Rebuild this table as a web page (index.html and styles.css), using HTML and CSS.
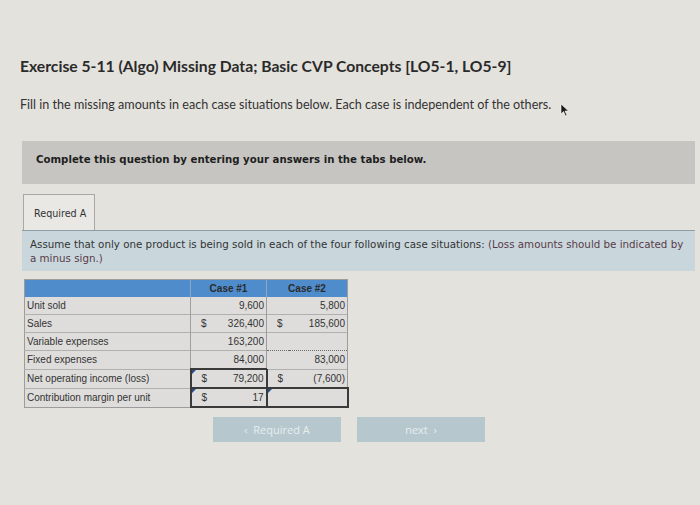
FILE: index.html
```html
<!DOCTYPE html>
<html>
<head>
<meta charset="utf-8">
<link rel="stylesheet" href="styles.css">
</head>
<body>
<div class="page">
  <h1 class="title">Exercise 5-11 (Algo) Missing Data; Basic CVP Concepts [LO5-1, LO5-9]</h1>
  <p class="intro">Fill in the missing amounts in each case situations below. Each case is independent of the others.<svg class="cursor" width="10" height="14" viewBox="0 0 10 14"><path d="M1 1 L1 11 L3.5 8.5 L5.5 13 L7 12.3 L5 8 L8.5 8 Z" fill="#1a1a1a" stroke="#fff" stroke-width="0.6"/></svg></p>
  <div class="banner">Complete this question by entering your answers in the tabs below.</div>
  <div class="tabs"><div class="tab">Required A</div></div>
  <div class="instructions">Assume that only one product is being sold in each of the four following case situations: <span class="note">(Loss amounts should be indicated by a minus sign.)</span></div>
  <table class="grid">
    <colgroup><col class="c-lbl"><col class="c-cur"><col class="c-val1"><col class="c-cur"><col class="c-val2"></colgroup>
    <thead>
      <tr><th></th><th colspan="2" class="hsep">Case #1</th><th colspan="2">Case #2</th></tr>
    </thead>
    <tbody>
      <tr><td class="lbl">Unit sold</td><td class="cur"></td><td class="val">9,600</td><td class="cur"></td><td class="val">5,800</td></tr>
      <tr><td class="lbl">Sales</td><td class="cur">$</td><td class="val">326,400</td><td class="cur dotb">$</td><td class="val dotb">185,600</td></tr>
      <tr><td class="lbl">Variable expenses</td><td class="cur"></td><td class="val">163,200</td><td class="cur dotl"></td><td class="val dotr"></td></tr>
      <tr><td class="lbl">Fixed expenses</td><td class="cur"></td><td class="val">84,000</td><td class="cur dott"></td><td class="val dott">83,000</td></tr>
      <tr><td class="lbl">Net operating income (loss)</td><td class="cur box mark">$</td><td class="val box">79,200</td><td class="cur">$</td><td class="val">(7,600)</td></tr>
      <tr><td class="lbl">Contribution margin per unit</td><td class="cur box mark">$</td><td class="val box">17</td><td class="cur box mark"></td><td class="val box"></td></tr>
    </tbody>
  </table>
  <div class="nav">
    <div class="btn">&lsaquo;&nbsp;&nbsp;Required A</div>
    <div class="btn">next&nbsp;&nbsp;&rsaquo;</div>
  </div>
</div>
</body>
</html>
```
FILE: styles.css
```css
html, body { margin: 0; padding: 0; }
body {
  background: #e4e2dd;
  width: 700px;
  height: 505px;
  overflow: hidden;
  font-family: "Liberation Sans", Arial, sans-serif;
  color: #222;
}
.page { padding: 57px 5px 0 20px; }
.title {
  font-family: Lato, "Open Sans", sans-serif;
  font-weight: 700;
  font-size: 15.7px;
  margin: 0;
  color: #2a2a2a;
}
.intro {
  font-family: Lato, "Open Sans", sans-serif;
  font-size: 12.6px;
  margin: 22px 0 0 0;
  color: #333;
  position: relative;
}
.cursor { position: absolute; left: 540px; top: 6px; }
.banner {
  margin: 29px 0 0 2px;
  background: #c6c5c1;
  height: 43px;
  box-sizing: border-box;
  padding: 13px 0 0 14px;
  font-family: "DejaVu Sans", Verdana, sans-serif;
  font-weight: 700;
  font-size: 10.2px;
  color: #1e1e1e;
}
.tabs { margin: 10px 0 0 3px; height: 36px; }
.tab {
  width: 72px;
  height: 36px;
  box-sizing: border-box;
  border: 1px solid #a9a8a4;
  border-bottom: none;
  background: #e9e8e4;
  font-family: "DejaVu Sans", Verdana, sans-serif;
  font-size: 9.6px;
  padding: 13px 0 0 10px;
  color: #333;
}
.instructions {
  margin-left: 2px;
  background: #c9d7dc;
  border-top: 1px solid #8e9ea5;
  padding: 6px 6px 6px 8px;
  height: 28px;
  font-family: "DejaVu Sans", Verdana, sans-serif;
  font-size: 10.3px;
  line-height: 14px;
  color: #333;
}
.note { color: #5a3a48; }
.grid {
  margin: 8px 0 0 4px;
  border-collapse: collapse;
  table-layout: fixed;
  width: 323px;
  font-family: "Liberation Sans", Arial, sans-serif;
  font-size: 10px;
  border: 1px solid #9c9c9c;
}
.c-lbl { width: 166px; }
.c-cur { width: 22px; }
.c-val1 { width: 54px; }
.c-val2 { width: 59px; }
.grid th {
  background: #4f8ccb;
  height: 17px;
  font-weight: 700;
  color: #2b2b2b;
  font-size: 10px;
  padding: 0;
}
.grid th.hsep { border-right: 1px solid #8aa7c4; border-left: 1px solid #8aa7c4; }
.grid td {
  background: #dedddb;
  height: 17px;
  padding: 0 2px;
  border-top: 1px solid #b0b0b0;
  color: #333;
  position: relative;
  white-space: nowrap;
}
.grid tbody tr:first-child td { border-top: none; }
.grid td.lbl { border-right: 1px solid #a0a0a0; }
.grid td.cur { text-align: left; padding-left: 10px; }
.grid td.val { text-align: right; border-right: 1px solid #9c9c9c; }
.grid td.dotb { border-bottom: 1px dotted #666; }
.grid td.dott { border-top: 1px dotted #666; }
.grid td.dotl { border-left: 1px dotted #666; }
.grid td.dotr { border-right: 1px dotted #666; }
.grid td.box { border-top: 2px solid #3a3a3a; border-bottom: 2px solid #3a3a3a; }
.grid td.cur.box { border-left: 2px solid #3a3a3a; }
.grid td.val.box { border-right: 2px solid #3a3a3a; }
.mark::before {
  content: "";
  position: absolute;
  left: 0;
  top: 0;
  border-top: 4px solid #2a4f86;
  border-right: 4px solid transparent;
}
.nav {
  display: flex;
  gap: 16px;
  margin: 9px 0 0 193px;
}
.btn {
  width: 128px;
  height: 25px;
  background: #b6c7cd;
  color: #e6eef0;
  font-family: "Open Sans", sans-serif;
  font-size: 11px;
  display: flex;
  align-items: center;
  justify-content: center;
}
```
